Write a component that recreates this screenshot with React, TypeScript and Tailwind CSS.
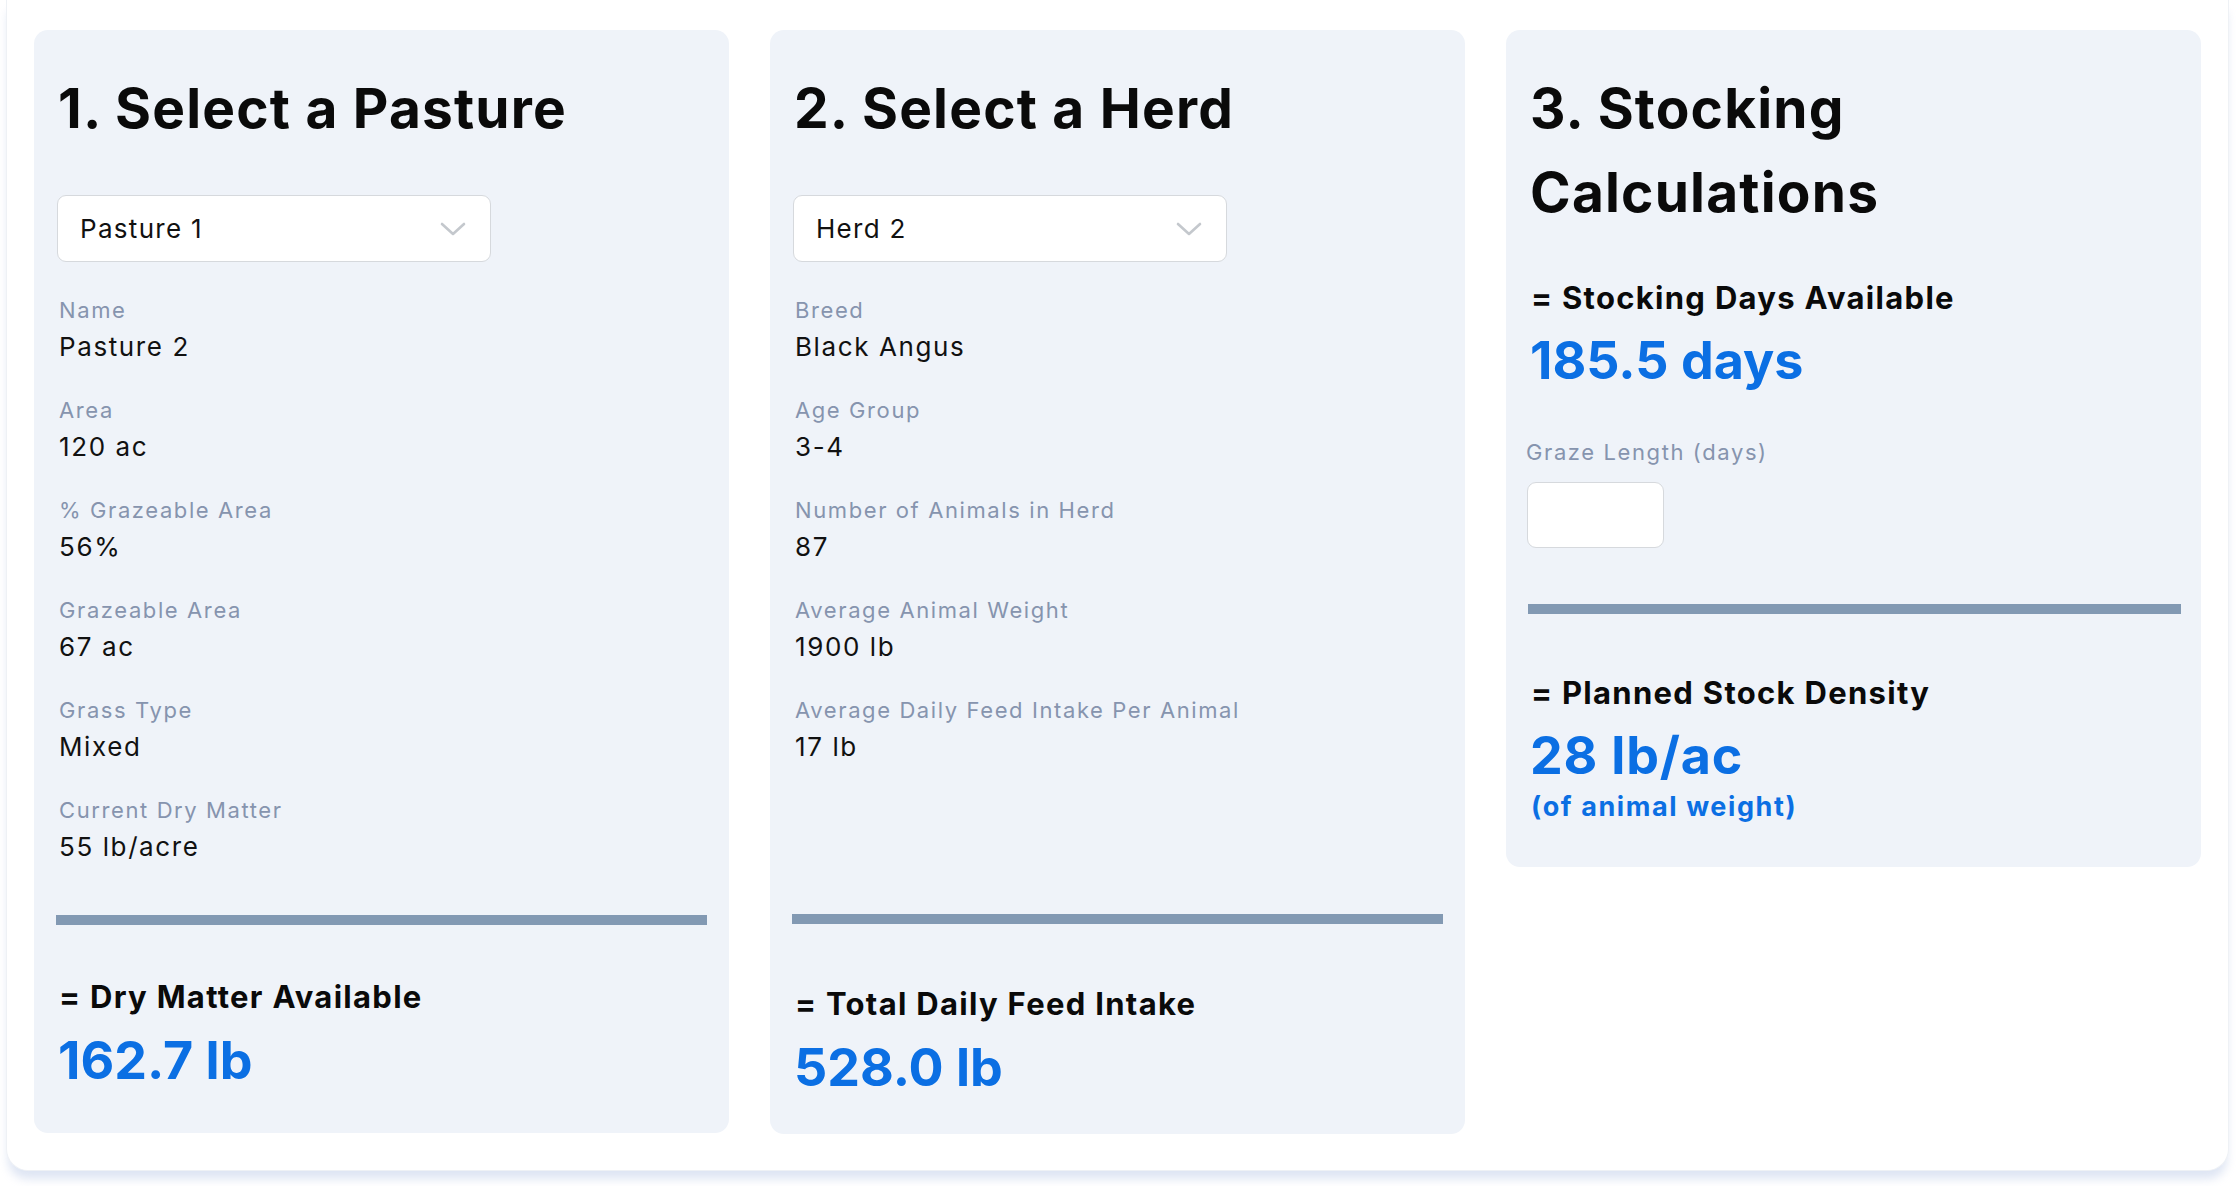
import React from 'react';

type Field = { label: string; value: string };

const pastureFields: Field[] = [
  { label: 'Name', value: 'Pasture 2' },
  { label: 'Area', value: '120 ac' },
  { label: '% Grazeable Area', value: '56%' },
  { label: 'Grazeable Area', value: '67 ac' },
  { label: 'Grass Type', value: 'Mixed' },
  { label: 'Current Dry Matter', value: '55 lb/acre' },
];

const herdFields: Field[] = [
  { label: 'Breed', value: 'Black Angus' },
  { label: 'Age Group', value: '3-4' },
  { label: 'Number of Animals in Herd', value: '87' },
  { label: 'Average Animal Weight', value: '1900 lb' },
  { label: 'Average Daily Feed Intake Per Animal', value: '17 lb' },
];

function Chevron() {
  return (
    <svg width="26" height="14" viewBox="0 0 26 14" fill="none">
      <path d="M2 2l11 10L24 2" stroke="#c4c8cd" strokeWidth={2.6} strokeLinecap="round" strokeLinejoin="round" />
    </svg>
  );
}

function Dropdown({ value }: { value: string }) {
  return (
    <div className="ml-px flex h-[67px] w-[434px] items-center justify-between rounded-[9px] border border-[#d6d9dd] bg-white pl-[22px] pr-[24px]">
      <span className="text-[26px] tracking-[1.3px] text-[#111]">{value}</span>
      <Chevron />
    </div>
  );
}

function Heading({ children }: { children: React.ReactNode }) {
  return <h2 className="pl-[2px] text-[55px] font-bold leading-[84px] tracking-[1.2px] text-[#0a0a0a]">{children}</h2>;
}

function ResultTitle({ children, className = '' }: { children: React.ReactNode; className?: string }) {
  return <div className={`pl-[3px] text-[31px] font-bold leading-[45px] tracking-[1.3px] text-[#0a0a0a] ${className}`}>= {children}</div>;
}

function ResultValue({ children, className = '' }: { children: React.ReactNode; className?: string }) {
  return <div className={`pl-[2px] text-[52px] font-bold leading-[62px] text-[#0b6fe3] ${className}`}>{children}</div>;
}

function FieldList({ fields }: { fields: Field[] }) {
  return (
    <div className="mt-8 flex min-h-[621px] flex-col gap-[28px] pl-[3px]">
      {fields.map((f) => (
        <div key={f.label}>
          <div className="text-[22px] leading-[33px] tracking-[1.6px] text-[#8694ae]">{f.label}</div>
          <div className="text-[26px] leading-[39px] tracking-[1.6px] text-[#111]">{f.value}</div>
        </div>
      ))}
    </div>
  );
}

function Divider() {
  return <div className="h-[10px] bg-[#8299b3]" />;
}

export default function App() {
  return (
    <div className="min-h-screen bg-white pl-[6px] pr-[7px] font-['Inter','Noto_Sans',sans-serif]">
      <div className="grid grid-cols-3 items-start gap-[41px] rounded-b-[22px] border-x border-b border-[#eef1f5] bg-white px-[27px] pb-[36px] pt-[30px] shadow-[0_10px_10px_-2px_rgba(214,223,240,0.8)]">
        {/* Pasture */}
        <section className="flex flex-col rounded-[14px] bg-[#eff3f9] px-[22px] pb-[41px] pt-[36px]">
          <Heading>1. Select a Pasture</Heading>
          <div className="mt-[45px]">
            <Dropdown value="Pasture 1" />
          </div>
          <FieldList fields={pastureFields} />
          <Divider />
          <ResultTitle className="mt-[49px]">Dry Matter Available</ResultTitle>
          <ResultValue className="mt-[11px]">162.7 lb</ResultValue>
        </section>

        {/* Herd */}
        <section className="flex flex-col rounded-[14px] bg-[#eff3f9] px-[22px] pb-[35px] pt-[36px]">
          <Heading>2. Select a Herd</Heading>
          <div className="mt-[45px]">
            <Dropdown value="Herd 2" />
          </div>
          <div className="-mb-px">
            <FieldList fields={herdFields} />
          </div>
          <Divider />
          <ResultTitle className="mt-[57px]">Total Daily Feed Intake</ResultTitle>
          <ResultValue className="mt-[11px]">528.0 lb</ResultValue>
        </section>

        {/* Stocking */}
        <section className="flex flex-col rounded-[14px] bg-[#eff3f9] pb-[43px] pl-[22px] pr-[20px] pt-[36px]">
          <Heading>
            3. Stocking
            <br />
            Calculations
          </Heading>
          <ResultTitle className="mt-[41px]">Stocking Days Available</ResultTitle>
          <ResultValue className="mt-[10px]">185.5 days</ResultValue>
          <div className="-ml-[2px] mt-[44px] text-[22px] leading-[33px] tracking-[1.6px] text-[#8694ae]">Graze Length (days)</div>
          <input
            type="text"
            className="-ml-px mt-[13px] h-[66px] w-[137px] rounded-[9px] border border-[#d6d9dd] bg-white outline-none"
          />
          <div className="mt-[56px]">
            <Divider />
          </div>
          <ResultTitle className="mt-[56px]">Planned Stock Density</ResultTitle>
          <ResultValue className="mt-[10px] tracking-[0.8px]">28 lb/ac</ResultValue>
          <div className="mt-[3px] pl-[3px] text-[27px] font-bold leading-[34px] tracking-[1.6px] text-[#0b6fe3]">(of animal weight)</div>
        </section>
      </div>
    </div>
  );
}
